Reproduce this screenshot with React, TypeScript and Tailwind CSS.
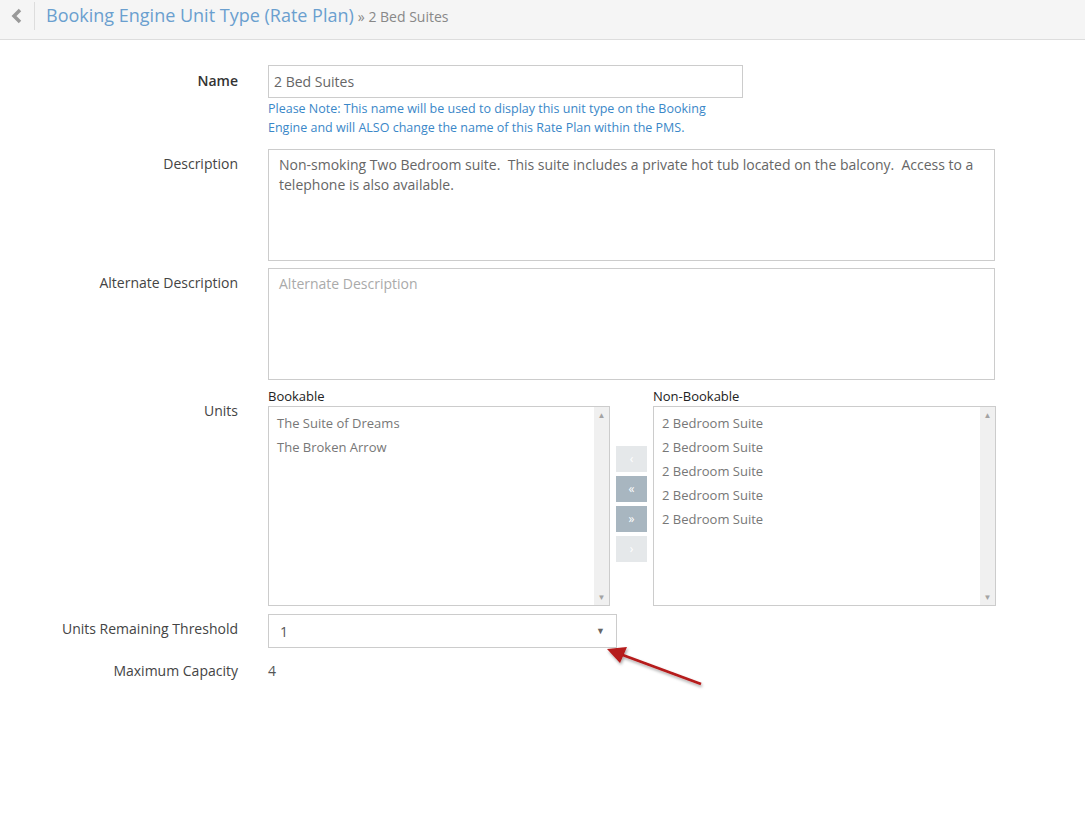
import React from "react"

const font = { fontFamily: '"Open Sans", "Liberation Sans", sans-serif' }

function ScrollBar() {
  return (
    <div className="w-[15px] bg-[#f0f0f0] flex flex-col justify-between items-center py-[4px] text-[#a3a3a3] text-[8px] leading-none">
      <span>▲</span>
      <span>▼</span>
    </div>
  )
}

function ListBox({ items }: { items: string[] }) {
  return (
    <div className="flex h-[200px] border border-[#cccccc] bg-white">
      <div className="flex-1 px-[8px] pt-[4px]">
        {items.map((t, i) => (
          <div key={i} className="h-[24px] leading-[24px] text-[13px] text-[#777]">{t}</div>
        ))}
      </div>
      <ScrollBar />
    </div>
  )
}

function Label({ children, className = "" }: { children: React.ReactNode; className?: string }) {
  return <div className={"w-[238px] shrink-0 text-right text-[14px] text-[#444] " + className}>{children}</div>
}

export default function App() {
  return (
    <div style={font} className="relative w-[1085px] h-[819px] bg-white">
      <header className="h-[40px] bg-[#f5f5f5] border-b border-[#dddddd] flex items-start pt-[2px]">
        <div className="w-[35px] h-[28px] flex items-center justify-center border-r border-[#dddddd]">
          <svg width="12" height="16" viewBox="0 0 12 16"><path d="M9 2 L3 8 L9 14" stroke="#999" strokeWidth="3.5" fill="none" /></svg>
        </div>
        <div className="pl-[11px] flex items-baseline gap-[4px] leading-[26px]">
          <span className="text-[18px] text-[#6a9fcf]">Booking Engine Unit Type (Rate Plan)</span>
          <span className="text-[14px] text-[#888]">» 2 Bed Suites</span>
        </div>
      </header>

      <div className="pt-[25px] flex flex-col">
        <div className="flex gap-[30px]">
          <Label className="pt-[5px]"><span className="font-semibold text-[#333]">Name</span></Label>
          <div>
            <div className="w-[475px] h-[33px] border border-[#cccccc] px-[5px] flex items-center text-[14px] text-[#666]">2 Bed Suites</div>
            <p className="w-[470px] mt-[1px] text-[12.5px] leading-[19px] text-[#3a87c8]">
              Please Note: This name will be used to display this unit type on the Booking Engine and will ALSO change the name of this Rate Plan within the PMS.
            </p>
          </div>
        </div>

        <div className="flex gap-[30px] mt-[12px]">
          <Label className="pt-[4px]">Description</Label>
          <div className="w-[727px] h-[112px] border border-[#cccccc] px-[10px] py-[5px] text-[14px] leading-[20px] text-[#666]">
            Non-smoking Two Bedroom suite.&nbsp; This suite includes a private hot tub located on the balcony.&nbsp; Access to a telephone is also available.
          </div>
        </div>

        <div className="flex gap-[30px] mt-[7px]">
          <Label className="pt-[4px]">Alternate Description</Label>
          <div className="w-[727px] h-[112px] border border-[#cccccc] px-[10px] py-[5px] text-[14px] leading-[20px] text-[#aaa]">
            Alternate Description
          </div>
        </div>

        <div className="flex gap-[30px] mt-[7px]">
          <Label className="pt-[13px]">Units</Label>
          <div className="flex">
            <div className="w-[342px]">
              <div className="text-[13px] leading-[19px] text-[#222]">Bookable</div>
              <ListBox items={["The Suite of Dreams", "The Broken Arrow"]} />
            </div>
            <div className="w-[31px] mx-[6px] pt-[59px] flex flex-col gap-[4px] text-[12px] text-white">
              <div className="h-[26px] bg-[#e5e8ea] flex items-center justify-center">‹</div>
              <div className="h-[26px] bg-[#a8b6c0] flex items-center justify-center">«</div>
              <div className="h-[26px] bg-[#a8b6c0] flex items-center justify-center">»</div>
              <div className="h-[26px] bg-[#e5e8ea] flex items-center justify-center">›</div>
            </div>
            <div className="w-[343px]">
              <div className="text-[13px] leading-[19px] text-[#222]">Non-Bookable</div>
              <ListBox items={Array(5).fill("2 Bedroom Suite")} />
            </div>
          </div>
        </div>

        <div className="flex gap-[30px] mt-[8px]">
          <Label className="pt-[4px]">Units Remaining Threshold</Label>
          <div className="w-[349px] h-[34px] border border-[#cccccc] flex items-center justify-between px-[11px] text-[14px] text-[#555]">
            <span>1</span>
            <span className="text-[9px] text-[#666]">▼</span>
          </div>
        </div>

        <div className="flex gap-[30px] mt-[12px]">
          <Label>Maximum Capacity</Label>
          <div className="text-[14px] text-[#555]">4</div>
        </div>
      </div>

      <svg className="absolute left-0 top-0 pointer-events-none" width="1085" height="819">
        <defs>
          <filter id="sh" x="-20%" y="-50%" width="140%" height="200%">
            <feDropShadow dx="1" dy="2" stdDeviation="1.5" floodOpacity="0.35" />
          </filter>
        </defs>
        <g filter="url(#sh)">
          <line x1="620" y1="654" x2="701" y2="684" stroke="#b51a1a" strokeWidth="2.5" />
          <polygon points="607,649 627,647 620,663" fill="#b51a1a" />
        </g>
      </svg>
    </div>
  )
}
